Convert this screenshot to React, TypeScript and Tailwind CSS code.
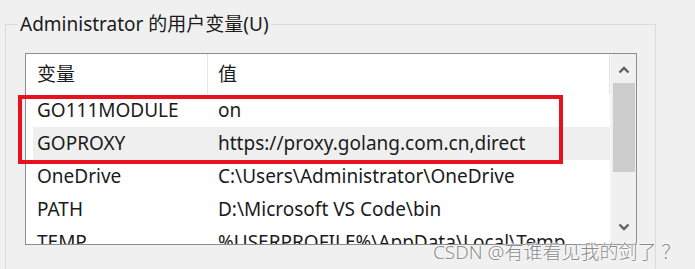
import React from "react";

const FONT = "font-['Noto_Sans','Noto_Sans_CJK_SC',sans-serif]";

const ROWS: { name: string; value: string; selected?: boolean }[] = [
  { name: "GO111MODULE", value: "on" },
  { name: "GOPROXY", value: "https://proxy.golang.com.cn,direct", selected: true },
  { name: "OneDrive", value: "C:\\Users\\Administrator\\OneDrive" },
  { name: "PATH", value: "D:\\Microsoft VS Code\\bin" },
  { name: "TEMP", value: "%USERPROFILE%\\AppData\\Local\\Temp" },
];

function Chevron({ up }: { up?: boolean }) {
  return (
    <svg width="12" height="8" viewBox="0 0 12 8" className={up ? "" : "rotate-180"}>
      <path d="M1.5 6.5 L6 2 L10.5 6.5" fill="none" stroke="#5f5f5f" strokeWidth="2.4" />
    </svg>
  );
}

export default function App() {
  return (
    <div className={`relative w-[695px] h-[269px] overflow-hidden bg-[#f0f0f0] text-[#1b1b1b] ${FONT}`}>
      {/* group box */}
      <div className="relative ml-[5px] mt-[24px] w-[651px] h-[260px] border border-[#dadada]">
        <span className="absolute left-[12px] top-[-16px] bg-[#f0f0f0] px-[2px] text-[19px] leading-[30px] text-[#1b1b1b]">
          Administrator 的用户变量(U)
        </span>

        {/* list box */}
        <div className="ml-[19px] mt-[28px] w-[612px] h-[192px] border border-[#8b8d92] bg-white flex overflow-hidden">
          <div className="flex-1 flex flex-col">
            {/* header */}
            <div className="flex h-[40px] shrink-0 items-center text-[19px]">
              <div className="w-[182px] h-full flex items-center pl-[11px] border-r border-[#e5e5e5]">变量</div>
              <div className="flex-1 h-full flex items-center pl-[10px] border-r border-[#e5e5e5]">值</div>
            </div>
            {ROWS.map((r) => (
              <div
                key={r.name}
                className={`flex h-[33px] shrink-0 items-center text-[19px] ${r.selected ? "bg-[#efefef] ml-[7px]" : ""}`}
              >
                <div className={`${r.selected ? "w-[175px] pl-[4px]" : "w-[182px] pl-[11px]"} whitespace-nowrap`}>{r.name}</div>
                <div className="flex-1 pl-[10px] whitespace-nowrap overflow-hidden">{r.value}</div>
              </div>
            ))}
          </div>
          {/* scrollbar */}
          <div className="w-[26px] shrink-0 flex flex-col items-center bg-[#f0f0f0] border-l border-[#f7f7f7]">
            <div className="h-[29px] flex items-center justify-center pt-[2px]">
              <Chevron up />
            </div>
            <div className="w-[22px] h-[89px] bg-[#cdcdcd]" />
            <div className="flex-1" />
            <div className="h-[28px] flex items-center justify-center pb-[6px]">
              <Chevron />
            </div>
          </div>
        </div>
      </div>

      {/* red highlight box */}
      <div className="absolute left-[18px] top-[95px] w-[545px] h-[69px] border-[4px] border-[#e8121e]" />

      {/* watermark */}
      <div className="absolute left-[433px] top-[238px] text-[19px] leading-[28px] font-light text-[#8a8a8a] [text-shadow:0_0_2px_#fff,0_0_2px_#fff,0_0_1px_#fff] whitespace-nowrap">
        CSDN @有谁看见我的剑了 ？
      </div>
    </div>
  );
}
